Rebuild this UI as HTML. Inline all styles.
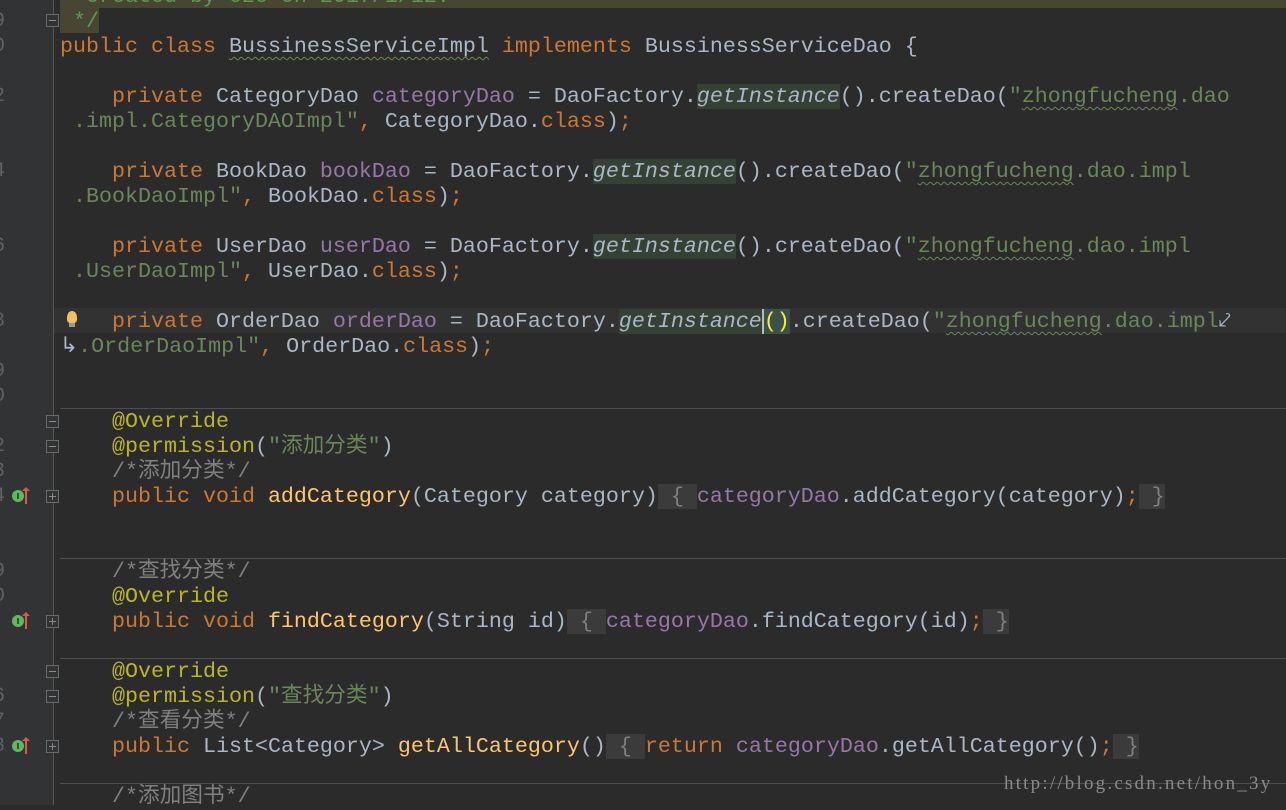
<!DOCTYPE html>
<html><head><meta charset="utf-8"><style>
body{margin:0;width:1286px;height:805px;overflow:hidden;background:#2b2b2b;position:relative;font-family:"Liberation Mono","Noto Sans CJK SC",monospace;font-size:21.67px;color:#a9b7c6}
.g{position:absolute;left:0;top:0;width:53px;height:805px;background:#313335;border-right:1px solid #555}
.l{position:absolute;left:60px;height:25px;line-height:27px;white-space:pre}
.k{color:#cc7832}.f{color:#9876aa}.s{color:#6a8759}.a{color:#bbb529}.c{color:#808080}.m{color:#ffc66d}
.i{font-style:italic;background:#344134}
.fb{background:#3b3b3b;color:#808080}
.sep{position:absolute;left:60px;right:0;height:1px;background:#4e4e4e}
.wv{text-decoration:underline wavy #6a8759;text-decoration-thickness:1px;text-underline-offset:4px}
.n{position:absolute;left:-7px;color:#606366;font-size:20px;height:25px;line-height:27px}
.ic{position:absolute;left:12px;width:12px;height:12px;border-radius:50%;background:#5fb85f}
.ic:after{content:"";position:absolute;left:5px;top:3px;width:2px;height:6px;background:#2b5a2b}
.ar{position:absolute;left:25px;width:2px;height:15px;background:#e0584a}
.ar:before{content:"";position:absolute;left:-3px;top:-2px;border:4px solid transparent;border-bottom:4px solid #e0584a;border-top:0}
.fold{position:absolute;left:46px;width:13px;height:13px;border:1px solid #6a6a6a;box-sizing:border-box;background:#313335}
.fold:before{content:"";position:absolute;left:2px;top:5px;width:7px;height:1px;background:#8a8a8a}
.pl:after{content:"";position:absolute;left:5px;top:2px;width:1px;height:7px;background:#8a8a8a}
</style></head><body>
<div class="g"></div>
<div class="n" style="top:8px">9</div><div class="n" style="top:33px">0</div><div class="n" style="top:83px">2</div><div class="n" style="top:158px">4</div><div class="n" style="top:233px">6</div><div class="n" style="top:308px">8</div><div class="n" style="top:358px">9</div><div class="n" style="top:383px">0</div><div class="n" style="top:433px">2</div><div class="n" style="top:458px">3</div><div class="n" style="top:483px">4</div><div class="n" style="top:558px">9</div><div class="n" style="top:583px">0</div><div class="n" style="top:683px">6</div><div class="n" style="top:708px">7</div><div class="n" style="top:733px">8</div>
<div style="position:absolute;left:60px;top:-17px;width:1226px;height:25px;background:#464632"></div>
<div style="position:absolute;left:60px;top:8px;width:39px;height:25px;background:#464632"></div>
<div class="l c" style="top:-17px;color:#629755">  created by ozo on 2017/1/12.</div>
<div class="l" style="top:8px;color:#629755"> */</div>
<div class="fold" style="top:14px"></div>
<div class="l" style="top:33px"><span class="k">public class </span><span class="wv">BussinessServiceImpl</span> <span class="k">implements </span>BussinessServiceDao {</div>
<div class="l" style="top:83px">    <span class="k">private </span>CategoryDao <span class="f">categoryDao</span> = DaoFactory.<span class="i">getInstance</span>().createDao(<span class="s">"<span class="wv">zhongfucheng</span>.dao</span></div>
<div class="l" style="top:108px"><span class="s"> .impl.CategoryDAOImpl"</span><span class="k">, </span>CategoryDao.<span class="k">class</span>)<span class="k">;</span></div>
<div class="l" style="top:158px">    <span class="k">private </span>BookDao <span class="f">bookDao</span> = DaoFactory.<span class="i">getInstance</span>().createDao(<span class="s">"<span class="wv">zhongfucheng</span>.dao.impl</span></div>
<div class="l" style="top:183px"><span class="s"> .BookDaoImpl"</span><span class="k">, </span>BookDao.<span class="k">class</span>)<span class="k">;</span></div>
<div class="l" style="top:233px">    <span class="k">private </span>UserDao <span class="f">userDao</span> = DaoFactory.<span class="i">getInstance</span>().createDao(<span class="s">"<span class="wv">zhongfucheng</span>.dao.impl</span></div>
<div class="l" style="top:258px"><span class="s"> .UserDaoImpl"</span><span class="k">, </span>UserDao.<span class="k">class</span>)<span class="k">;</span></div>
<div style="position:absolute;left:54px;top:308px;right:0;height:25px;background:#323232"></div>
<div style="position:absolute;left:67px;top:311px;width:10px;height:12px;border-radius:50% 50% 30% 30%;background:#f0c060"></div>
<div style="position:absolute;left:69px;top:323px;width:6px;height:4px;background:#999"></div>
<div class="l" style="top:308px">    <span class="k">private </span>OrderDao <span class="f">orderDao</span> = DaoFactory.<span class="i">getInstance</span><span style="background:#3b514d;color:#ffef28;border-left:2px solid #bbb">()</span>.createDao(<span class="s">"<span class="wv">zhongfucheng</span>.dao.impl</span>⤦</div>
<div class="l" style="top:333px">↳<span class="s">.OrderDaoImpl"</span><span class="k">, </span>OrderDao.<span class="k">class</span>)<span class="k">;</span></div>
<div class="sep" style="top:408px"></div>
<div class="fold" style="top:415px"></div><div class="fold" style="top:440px"></div>
<div class="l" style="top:408px">    <span class="a">@Override</span></div>
<div class="l" style="top:433px">    <span class="a">@permission</span>(<span class="s">"添加分类"</span>)</div>
<div class="l c" style="top:458px">    /*添加分类*/</div>
<div class="ic" style="top:490px"></div><div class="ar" style="top:489px"></div><div class="fold pl" style="top:490px"></div>
<div class="l" style="top:483px">    <span class="k">public void </span><span class="m">addCategory</span>(Category category)<span class="fb"> { </span><span class="f">categoryDao</span>.addCategory(category)<span class="k">;</span><span class="fb"> }</span></div>
<div class="sep" style="top:558px"></div>
<div class="l c" style="top:558px">    /*查找分类*/</div>
<div class="l" style="top:583px">    <span class="a">@Override</span></div>
<div class="ic" style="top:615px"></div><div class="ar" style="top:614px"></div><div class="fold pl" style="top:615px"></div>
<div class="l" style="top:608px">    <span class="k">public void </span><span class="m">findCategory</span>(String id)<span class="fb"> { </span><span class="f">categoryDao</span>.findCategory(id)<span class="k">;</span><span class="fb"> }</span></div>
<div class="sep" style="top:658px"></div>
<div class="fold" style="top:665px"></div><div class="fold" style="top:690px"></div>
<div class="l" style="top:658px">    <span class="a">@Override</span></div>
<div class="l" style="top:683px">    <span class="a">@permission</span>(<span class="s">"查找分类"</span>)</div>
<div class="l c" style="top:708px">    /*查看分类*/</div>
<div class="ic" style="top:740px"></div><div class="ar" style="top:739px"></div><div class="fold pl" style="top:740px"></div>
<div class="l" style="top:733px">    <span class="k">public </span>List&lt;Category&gt; <span class="m">getAllCategory</span>()<span class="fb"> { </span><span class="k">return </span><span class="f">categoryDao</span>.getAllCategory()<span class="k">;</span><span class="fb"> }</span></div>
<div class="sep" style="top:783px"></div>
<div class="l c" style="top:783px">    /*添加图书*/</div>
<div style="position:absolute;left:1004px;top:773px;font-family:'Liberation Serif','Noto Serif CJK SC',serif;font-size:19px;color:#8a8a8a;letter-spacing:2.2px">http://blog.csdn.net/hon_3y</div>
</body></html>
